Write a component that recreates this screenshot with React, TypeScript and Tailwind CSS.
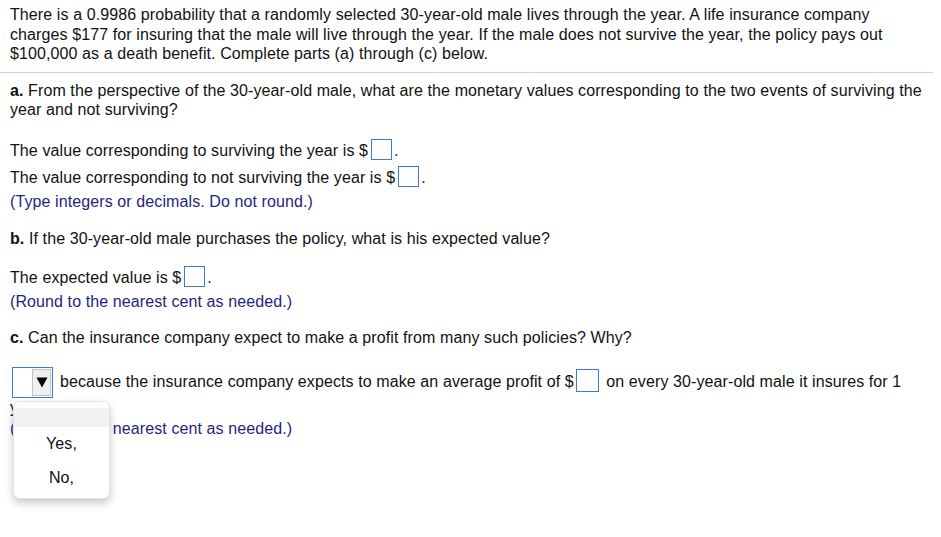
const AnswerBox = ({ wide }: { wide?: boolean }) => (
  <span
    className={
      wide
        ? "inline-block align-middle w-[23px] h-[23px] border border-[#3f78d8] bg-white ml-[2px] mr-[3px] -mt-[3px]"
        : "inline-block align-middle w-[21px] h-[21px] border border-[#3f78d8] bg-white ml-[3px] mr-[2px] -mt-[3px]"
    }
  />
);

const Hint = ({ children, className }: { children: React.ReactNode; className?: string }) => (
  <p className={"text-[#231f80] " + (className ?? "")}>{children}</p>
);

const DropdownMenu = () => (
  <div className="absolute left-[13px] top-[401px] w-[97px] h-[98px] bg-white rounded-[7px] border border-[#e4e4e4] shadow-[0_4px_8px_rgba(0,0,0,0.22)] pt-[6px]">
    <div className="h-[19px] bg-[#f2f2f2]" />
    <div className="h-[34px] flex items-center justify-center text-[#111]">Yes,</div>
    <div className="h-[34px] flex items-center justify-center text-[#111]">No,</div>
  </div>
);

export default function App() {
  return (
    <div
      className="relative w-[941px] h-[537px] bg-white text-[16px] leading-[19.5px] tracking-[0.1px] text-[#111] overflow-hidden"
      style={{ fontFamily: '"Liberation Sans", Arial, sans-serif' }}
    >
      <div className="w-[933px]">
        <p className="px-[10px] pt-[5px]">
          There is a 0.9986 probability that a randomly selected 30-year-old male lives through the year. A life insurance company
          charges $177 for insuring that the male will live through the year. If the male does not survive the year, the policy pays out
          $100,000 as a death benefit. Complete parts (a) through (c) below.
        </p>

        <div className="mt-[8px] h-px bg-[#c9cee0]" />

        <div className="px-[10px]">
          <p className="mt-[8px]">
            <b>a.</b> From the perspective of the 30-year-old male, what are the monetary values corresponding to the two events of surviving the
            year and not surviving?
          </p>

          <div className="mt-[18px]">
            <p className="h-[27px] flex items-center">
              The value corresponding to surviving the year is $<AnswerBox />.
            </p>
            <p className="h-[27px] flex items-center">
              The value corresponding to not surviving the year is $<AnswerBox />.
            </p>
            <Hint>(Type integers or decimals. Do not round.)</Hint>
          </div>

          <p className="mt-[18px]">
            <b>b.</b> If the 30-year-old male purchases the policy, what is his expected value?
          </p>

          <div className="mt-[16px]">
            <p className="h-[27px] flex items-center">
              The expected value is $<AnswerBox />.
            </p>
            <Hint>(Round to the nearest cent as needed.)</Hint>
          </div>

          <p className="mt-[17px]">
            <b>c.</b> Can the insurance company expect to make a profit from many such policies? Why?
          </p>

          <p className="mt-[19px]">
            <span className="inline-flex align-middle ml-[2px] mr-[7px] w-[41px] h-[31px] border border-[#3f78d8] bg-white justify-end items-center pr-[1px]">
              <span className="w-[19px] h-[27px] bg-[#efefef] border border-[#c4c4c4] flex items-center justify-center">
                <svg width="12" height="12" viewBox="0 0 12 12">
                  <path d="M0.5 1.5 H11.5 L6 11.5 Z" fill="#000" />
                </svg>
              </span>
            </span>
            because the insurance company expects to make an average profit of $<AnswerBox wide /> on every 30-year-old male it insures for 1
            year.
          </p>
          <Hint className="mt-[2px]">(Round to the nearest cent as needed.)</Hint>
        </div>
      </div>

      <DropdownMenu />
    </div>
  );
}
